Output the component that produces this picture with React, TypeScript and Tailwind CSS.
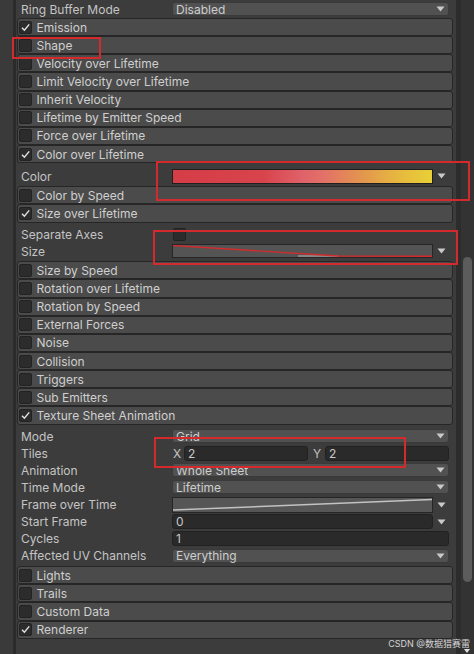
import React from 'react'

const font = "font-['Inter','Noto_Sans_CJK_SC',sans-serif]"

function Arrow() {
  return (
    <svg width="9" height="6" viewBox="0 0 9 6" className="shrink-0">
      <path d="M0.5 0.5 H8.5 L4.5 5.5 Z" fill="#c9c9c9" />
    </svg>
  )
}

function Checkbox({ checked }: { checked?: boolean }) {
  return (
    <div className="w-[13px] h-[13px] shrink-0 rounded-[2px] bg-[#2c2c2c] border border-[#222] flex items-center justify-center">
      {checked ? (
        <svg width="11" height="11" viewBox="0 0 11 11">
          <path d="M2 5.8 L4.4 8.2 L9.2 2.4" fill="none" stroke="#e4e4e4" strokeWidth="1.4" />
        </svg>
      ) : null}
    </div>
  )
}

function Header({ label, checked }: { label: string; checked?: boolean }) {
  return (
    <div className="h-[18.15px] shrink-0 flex items-center rounded-[3px] border border-[#262626] bg-[#4b4b4b] pl-[1px]">
      <Checkbox checked={checked} />
      <span className="ml-[4.5px] mt-[1px] text-[12px] text-[#cfcfcf] leading-none">{label}</span>
    </div>
  )
}

function Prop({ label, h = 'h-[17px]', children }: { label: string; h?: string; children: React.ReactNode }) {
  return (
    <div className={`${h} shrink-0 flex items-center pr-[4px]`}>
      <div className="w-[155px] shrink-0 pl-[4px] mt-[1px] text-[12px] text-[#c4c4c4] leading-none">{label}</div>
      <div className="flex-1 flex items-center">{children}</div>
    </div>
  )
}

function Dropdown({ value }: { value: string }) {
  return (
    <div className="flex-1 h-[14px] rounded-[3px] bg-[#515151] border border-[#3a3a3a] flex items-center justify-between pl-[3px] pr-[3px]">
      <span className="mt-[1px] text-[12px] text-[#cdcdcd] leading-none">{value}</span>
      <Arrow />
    </div>
  )
}

function TextField({ value, className = 'flex-1' }: { value: string; className?: string }) {
  return (
    <div className={`${className} h-[15px] rounded-[3px] bg-[#2a2a2a] border border-[#212121] flex items-center pl-[3px]`}>
      <span className="mt-[1px] text-[12px] text-[#c8c8c8] leading-none">{value}</span>
    </div>
  )
}

function WithArrow({ children }: { children: React.ReactNode }) {
  return (
    <div className="flex-1 flex items-center">
      <div className="w-[261px] shrink-0">{children}</div>
      <div className="flex-1 flex justify-center">
        <Arrow />
      </div>
    </div>
  )
}

export default function App() {
  const top = [
    { label: 'Emission', checked: true },
    { label: 'Shape' },
    { label: 'Velocity over Lifetime' },
    { label: 'Limit Velocity over Lifetime' },
    { label: 'Inherit Velocity' },
    { label: 'Lifetime by Emitter Speed' },
    { label: 'Force over Lifetime' },
    { label: 'Color over Lifetime', checked: true },
  ]
  const mid = [
    { label: 'Size by Speed' },
    { label: 'Rotation over Lifetime' },
    { label: 'Rotation by Speed' },
    { label: 'External Forces' },
    { label: 'Noise' },
    { label: 'Collision' },
    { label: 'Triggers' },
    { label: 'Sub Emitters' },
    { label: 'Texture Sheet Animation', checked: true },
  ]
  const bottom = [
    { label: 'Lights' },
    { label: 'Trails' },
    { label: 'Custom Data' },
    { label: 'Renderer', checked: true },
  ]

  return (
    <div className={`relative w-[474px] h-[654px] overflow-hidden bg-[#3c3c3c] flex ${font}`}>
      {/* left gutter */}
      <div className="w-[13px] shrink-0 bg-[#3a3a3a]" />
      <div className="w-[3px] shrink-0 bg-[#2b2b2b]" />

      {/* inspector body */}
      <div className="w-[440px] shrink-0 flex flex-col pl-[1px] pr-[3px]">
        <Prop label="Ring Buffer Mode" h="h-[18px]">
          <Dropdown value="Disabled" />
        </Prop>

        {top.map((r) => (
          <Header key={r.label} {...r} />
        ))}

        <div className="pt-[4.5px] pb-[1.65px] shrink-0">
          <Prop label="Color">
            <WithArrow>
              <div className="h-[15px] border border-[#1f1f1f] bg-[linear-gradient(to_right,#d53d47_0%,#d8434c_35%,#e0626a_50%,#e27168_58%,#e3934f_72%,#e6b640_86%,#e8d036_100%)]" />
            </WithArrow>
          </Prop>
        </div>

        <Header label="Color by Speed" />
        <Header label="Size over Lifetime" checked />

        <div className="pt-[3.2px] pb-[1.5px] shrink-0">
          <Prop label="Separate Axes">
            <div className="ml-[1px]">
              <Checkbox />
            </div>
          </Prop>
          <Prop label="Size">
            <WithArrow>
              <div className="h-[14px] border border-[#262626] bg-[#545454]">
                <svg width="259" height="12" viewBox="0 0 259 12" className="block">
                  <path d="M125 11 L165 11" stroke="#b8b8b8" strokeWidth="1.2" fill="none" />
                  <path d="M0 0.5 L165 11 L259 11.3" stroke="#d32b2b" strokeWidth="1.4" fill="none" />
                </svg>
              </div>
            </WithArrow>
          </Prop>
        </div>

        {mid.map((r) => (
          <Header key={r.label} {...r} />
        ))}

        <div className="pt-[3.15px] pb-[1.7px] shrink-0">
          <Prop label="Mode" h="h-[17.1px]">
            <Dropdown value="Grid" />
          </Prop>
          <Prop label="Tiles" h="h-[17.1px]">
            <span className="w-[12px] shrink-0 pl-[1px] mt-[1px] text-[12px] text-[#c4c4c4] leading-none">X</span>
            <TextField value="2" className="w-[124px] shrink-0" />
            <span className="w-[17px] shrink-0 pl-[5px] mt-[1px] text-[12px] text-[#c4c4c4] leading-none">Y</span>
            <TextField value="2" />
          </Prop>
          <Prop label="Animation" h="h-[17.1px]">
            <Dropdown value="Whole Sheet" />
          </Prop>
          <Prop label="Time Mode" h="h-[17.1px]">
            <Dropdown value="Lifetime" />
          </Prop>
          <Prop label="Frame over Time" h="h-[17.1px]">
            <WithArrow>
              <div className="h-[16px] border border-[#262626] bg-[#565656]">
                <svg width="259" height="14" viewBox="0 0 259 14" className="block">
                  <path d="M0 12 L259 1.5" stroke="#c2c2c2" strokeWidth="1.5" fill="none" />
                </svg>
              </div>
            </WithArrow>
          </Prop>
          <Prop label="Start Frame" h="h-[17.1px]">
            <WithArrow>
              <TextField value="0" className="w-full" />
            </WithArrow>
          </Prop>
          <Prop label="Cycles" h="h-[17.1px]">
            <TextField value="1" />
          </Prop>
          <Prop label="Affected UV Channels" h="h-[17.1px]">
            <Dropdown value="Everything" />
          </Prop>
        </div>

        {bottom.map((r) => (
          <Header key={r.label} {...r} />
        ))}
      </div>

      {/* scrollbar */}
      <div className="w-[5px] shrink-0 bg-[#2c2c2c]" />
      <div className="flex-1 bg-[#333333] pt-[257px] pl-[2px] pr-[2px]">
        <div className="h-[325px] rounded-full bg-[#5c5c5c]" />
      </div>

      {/* annotation boxes */}
      <div className="absolute left-[12px] top-[37px] w-[89px] h-[22px] border-2 border-[#d42a2e]" />
      <div className="absolute left-[156px] top-[161px] w-[314px] h-[40px] border-2 border-[#d42a2e]" />
      <div className="absolute left-[153px] top-[230px] w-[305px] h-[35px] border-2 border-[#d42a2e]" />
      <div className="absolute left-[154px] top-[437px] w-[252px] h-[31px] border-2 border-[#d42a2e]" />

      {/* watermark */}
      <div className="absolute right-[4px] bottom-[6px] text-[9px] leading-none text-[#d4d4d4]">CSDN @数据猎赛雷</div>
      <svg width="6" height="4" viewBox="0 0 6 4" className="absolute right-[4px] bottom-[1px]">
        <path d="M0 0 H6 L3 4 Z" fill="#e0e0e0" />
      </svg>
    </div>
  )
}
